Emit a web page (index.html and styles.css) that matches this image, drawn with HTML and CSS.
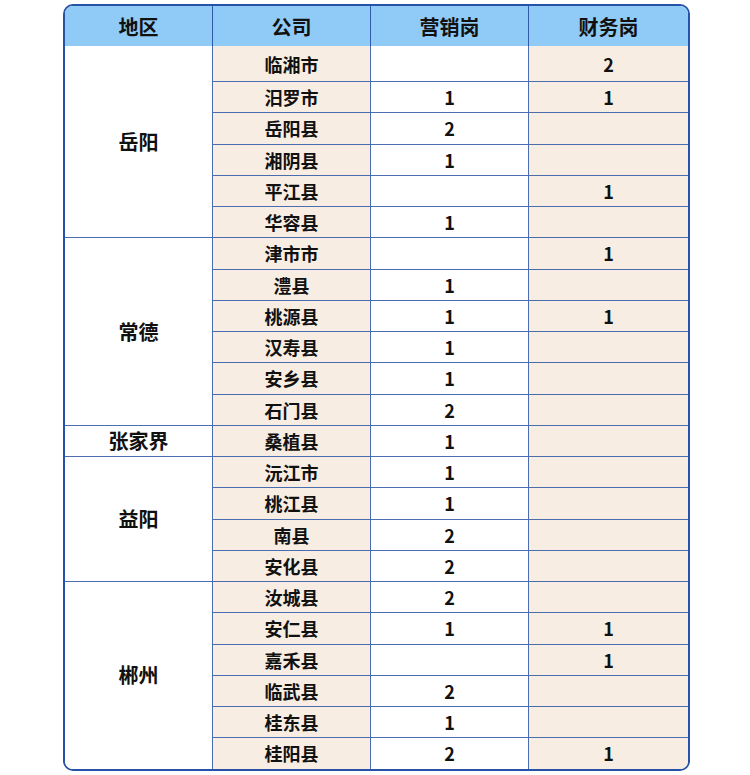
FILE: index.html
```html
<!DOCTYPE html>
<html lang="zh">
<head>
<meta charset="utf-8">
<link rel="stylesheet" href="styles.css">
</head>
<body>
<div class="wrap">
<table class="tbl">
<colgroup><col class="c1"><col class="c2"><col class="c3"><col class="c4"></colgroup>
<thead>
<tr><th>地区</th><th>公司</th><th>营销岗</th><th>财务岗</th></tr>
</thead>
<tbody>
<tr class="first"><td class="reg" rowspan="6">岳阳</td><td class="co">临湘市</td><td class="mk"></td><td class="fi">2</td></tr>
<tr><td class="co">汨罗市</td><td class="mk">1</td><td class="fi">1</td></tr>
<tr><td class="co">岳阳县</td><td class="mk">2</td><td class="fi"></td></tr>
<tr><td class="co">湘阴县</td><td class="mk">1</td><td class="fi"></td></tr>
<tr><td class="co">平江县</td><td class="mk"></td><td class="fi">1</td></tr>
<tr><td class="co">华容县</td><td class="mk">1</td><td class="fi"></td></tr>
<tr><td class="reg" rowspan="6">常德</td><td class="co">津市市</td><td class="mk"></td><td class="fi">1</td></tr>
<tr><td class="co">澧县</td><td class="mk">1</td><td class="fi"></td></tr>
<tr><td class="co">桃源县</td><td class="mk">1</td><td class="fi">1</td></tr>
<tr><td class="co">汉寿县</td><td class="mk">1</td><td class="fi"></td></tr>
<tr><td class="co">安乡县</td><td class="mk">1</td><td class="fi"></td></tr>
<tr><td class="co">石门县</td><td class="mk">2</td><td class="fi"></td></tr>
<tr><td class="reg">张家界</td><td class="co">桑植县</td><td class="mk">1</td><td class="fi"></td></tr>
<tr><td class="reg" rowspan="4">益阳</td><td class="co">沅江市</td><td class="mk">1</td><td class="fi"></td></tr>
<tr><td class="co">桃江县</td><td class="mk">1</td><td class="fi"></td></tr>
<tr><td class="co">南县</td><td class="mk">2</td><td class="fi"></td></tr>
<tr><td class="co">安化县</td><td class="mk">2</td><td class="fi"></td></tr>
<tr><td class="reg" rowspan="6">郴州</td><td class="co">汝城县</td><td class="mk">2</td><td class="fi"></td></tr>
<tr><td class="co">安仁县</td><td class="mk">1</td><td class="fi">1</td></tr>
<tr><td class="co">嘉禾县</td><td class="mk"></td><td class="fi">1</td></tr>
<tr><td class="co">临武县</td><td class="mk">2</td><td class="fi"></td></tr>
<tr><td class="co">桂东县</td><td class="mk">1</td><td class="fi"></td></tr>
<tr><td class="co">桂阳县</td><td class="mk">2</td><td class="fi">1</td></tr>
</tbody>
</table>
</div>
</body>
</html>
```

FILE: styles.css
```css
html, body {
  margin: 0;
  padding: 0;
  background: #ffffff;
}
body {
  font-family: "Noto Sans CJK SC", "Noto Sans", sans-serif;
  color: #111111;
}
.wrap {
  margin: 4px 0 0 63px;
  width: 627px;
  box-sizing: border-box;
  border: 2px solid #2652a8;
  border-radius: 10px;
  overflow: hidden;
}
.tbl {
  width: 623px;
  table-layout: fixed;
  border-collapse: separate;
  border-spacing: 0;
}
.c1 { width: 147px; }
.c2 { width: 158px; }
.c3 { width: 158px; }
.c4 { width: 160px; }
.tbl th {
  background: #90caf7;
  height: 40px;
  padding: 0;
  font-size: 20px;
  font-weight: 700;
  text-align: center;
  vertical-align: middle;
  border-left: 1px solid #2f5aa8;
  box-sizing: border-box;
}
.tbl th:first-child { border-left: none; }
.tbl td {
  padding: 0;
  height: 31.25px;
  box-sizing: border-box;
  font-size: 18px;
  font-weight: 700;
  text-align: center;
  vertical-align: middle;
  border-top: 1.5px solid #4a6db0;
  border-left: 1.5px solid #4a6db0;
  line-height: 1;
}
.tbl tr.first td { border-top: none; height: 35px; }
.tbl td.reg { border-left: none; background: #ffffff; font-size: 20px; }
.tbl td.co { background: #f8ede3; }
.tbl td.mk { background: #ffffff; }
.tbl td.fi { background: #f8ede3; }
```
